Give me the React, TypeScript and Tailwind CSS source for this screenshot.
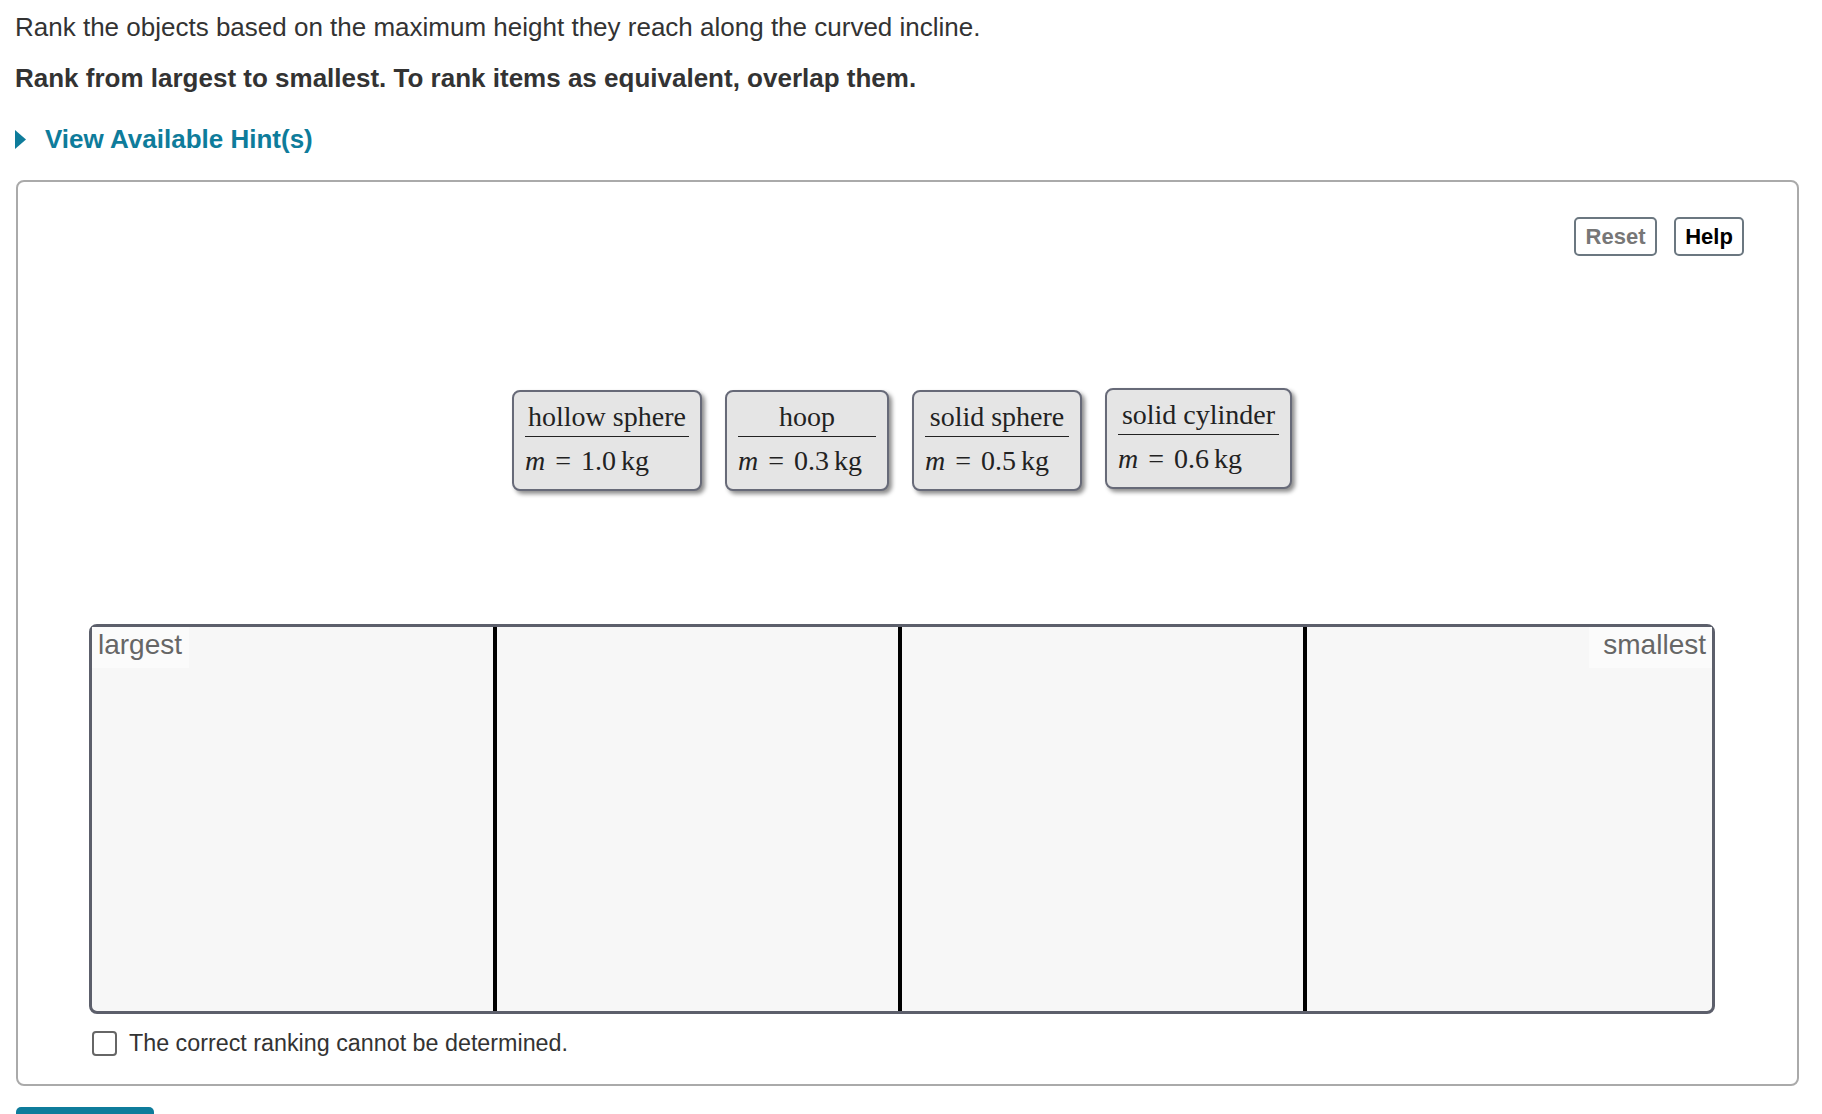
import React from "react";

type Item = { name: string; mass: string; width: string; lift?: boolean };

const items: Item[] = [
  { name: "hollow sphere", mass: "1.0", width: "w-[190px]" },
  { name: "hoop", mass: "0.3", width: "w-[164px]" },
  { name: "solid sphere", mass: "0.5", width: "w-[170px]" },
  { name: "solid cylinder", mass: "0.6", width: "w-[187px]", lift: true },
];

function Card({ item }: { item: Item }) {
  return (
    <div
      className={`${item.width} ${
        item.lift ? "-mt-[2px]" : ""
      } rounded-[8px] border-2 border-[#676a78] bg-[#e5e5e5] px-[11px] pt-[9px] pb-[12px] shadow-[3px_3px_4px_rgba(0,0,0,0.45)] font-['Liberation_Serif',serif] text-[28px] leading-[32px] text-[#222]`}
    >
      <div className="text-center">{item.name}</div>
      <div className="mt-[3px] border-t border-[#222]" />
      <div className="mt-[8px] whitespace-nowrap">
        <span className="italic">m</span>
        <span className="mx-[10px]">=</span>
        {item.mass}
        <span className="ml-[5px]">kg</span>
      </div>
    </div>
  );
}

export default function App() {
  return (
    <div className="min-h-screen bg-white pl-[15px] pt-[12px] font-['Liberation_Sans',Arial,sans-serif] text-[#333]">
      {/* Prompt */}
      <p className="text-[26px] leading-[30px]">
        Rank the objects based on the maximum height they reach along the curved incline.
      </p>
      <p className="mt-[21px] text-[26px] font-bold leading-[30px]">
        Rank from largest to smallest. To rank items as equivalent, overlap them.
      </p>
      <div className="mt-[31px] flex items-center text-[26px] font-bold leading-[30px] text-[#0e7c9b]">
        <svg width="11" height="19" viewBox="0 0 11 19">
          <path d="M0 0 L11 9.5 L0 19 Z" fill="#0e7c9b" />
        </svg>
        <span className="ml-[19px]">View Available Hint(s)</span>
      </div>

      {/* Ranking widget */}
      <div className="ml-[1px] mt-[26px] h-[906px] w-[1783px] rounded-[8px] border-2 border-[#aaaaaa] pt-[35px]">
        <div className="flex justify-end gap-[17px] pr-[53px]">
          <button className="h-[39px] w-[83px] rounded-[5px] border-2 border-[#6b7780] text-[22px] font-bold text-[#777]">
            Reset
          </button>
          <button className="h-[39px] w-[70px] rounded-[5px] border-2 border-[#6b7780] text-[22px] font-bold text-black">
            Help
          </button>
        </div>

        <div className="ml-[71px] w-[1626px]">
          <div className="mt-[134px] flex items-start justify-center gap-[23px]">
            {items.map((item) => (
              <Card key={item.name} item={item} />
            ))}
          </div>

          <div className="mt-[133px] grid h-[390px] grid-cols-4 rounded-[8px] border-[3px] border-[#5c5f6b] bg-[#f7f7f7]">
            <div className="flex flex-col items-start border-r-4 border-black">
              <span className="bg-[#fbfbfb] pl-[6px] pr-[7px] pt-[2px] pb-[8px] text-[28px] leading-[31px] text-[#666]">
                largest
              </span>
            </div>
            <div className="border-r-4 border-black" />
            <div className="border-r-4 border-black" />
            <div className="flex flex-col items-end">
              <span className="bg-[#fbfbfb] pl-[14px] pr-[6px] pt-[2px] pb-[8px] text-[28px] leading-[31px] text-[#666]">
                smallest
              </span>
            </div>
          </div>

          <label className="mt-[16px] flex items-center gap-[12px]">
            <span className="ml-[3px] h-[25px] w-[25px] rounded-[4px] border-2 border-[#666]" />
            <span className="text-[23.3px] leading-[26px] text-[#333]">
              The correct ranking cannot be determined.
            </span>
          </label>
        </div>
      </div>

      <button className="ml-[1px] mt-[21px] h-[40px] w-[138px] rounded-t-[5px] bg-[#0e7c9b]" />
    </div>
  );
}
